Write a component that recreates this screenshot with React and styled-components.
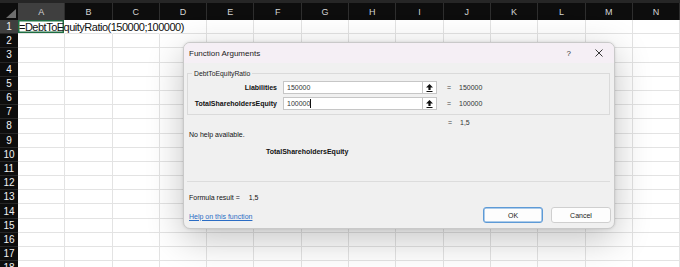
import React from 'react';
import styled, { createGlobalStyle, css } from 'styled-components';

const columns = ['A', 'B', 'C', 'D', 'E', 'F', 'G', 'H', 'I', 'J', 'K', 'L', 'M', 'N'];
const rows = Array.from({ length: 18 }, (_, i) => i + 1);

// the formula text in A1 runs over B1 and C1, so their right gridlines are hidden
const overflowCols = ['A', 'B', 'C'];

function UploadIcon() {
  return (
    <svg width="7" height="8" viewBox="0 0 7 8">
      <path d="M3.5 0 L7 3.6 H4.6 V6 H2.4 V3.6 H0 Z" fill="#111" />
      <rect x="0.5" y="7" width="6" height="1" fill="#111" />
    </svg>
  );
}

function CloseIcon() {
  return (
    <svg width="8" height="8" viewBox="0 0 8 8">
      <path d="M0.5 0.5 L7.5 7.5 M7.5 0.5 L0.5 7.5" stroke="#222" strokeWidth="0.9" />
    </svg>
  );
}

export default function App() {
  return (
    <>
      <GlobalStyle />
      <Sheet>
        <TopStrip />
        <Grid>
          <Corner />
          {columns.map((c) => (
            <ColHead key={c} $active={c === 'A'}>{c}</ColHead>
          ))}
          {rows.map((r) => (
            <React.Fragment key={r}>
              <RowHead $active={r === 1}>{r}</RowHead>
              {columns.map((c) => (
                <Cell
                  key={c}
                  $selected={r === 1 && c === 'A'}
                  $noRight={r === 1 && overflowCols.includes(c)}
                >
                  {r === 1 && c === 'A' && <CellText>=DebtToEquityRatio(150000;100000)</CellText>}
                </Cell>
              ))}
            </React.Fragment>
          ))}
        </Grid>

        <Dialog>
          <TitleBar>
            <Title>Function Arguments</Title>
            <TitleButtons>
              <Help>?</Help>
              <CloseIcon />
            </TitleButtons>
          </TitleBar>

          <Group>
            <Legend>DebtToEquityRatio</Legend>
            <ArgRow>
              <ArgLabel>Liabilities</ArgLabel>
              <ArgInput>150000</ArgInput>
              <PickButton><UploadIcon /></PickButton>
              <Equals>=</Equals>
              <Value>150000</Value>
            </ArgRow>
            <ArgRow>
              <ArgLabel>TotalShareholdersEquity</ArgLabel>
              <ArgInput>100000<Caret /></ArgInput>
              <PickButton><UploadIcon /></PickButton>
              <Equals>=</Equals>
              <Value>100000</Value>
            </ArgRow>
          </Group>

          <ResultRow>
            <Equals>=</Equals>
            <Value>1,5</Value>
          </ResultRow>

          <Text $top={5}>No help available.</Text>
          <ArgHelp>TotalShareholdersEquity</ArgHelp>

          <Separator />

          <Text $top={12}>
            Formula result =<FormulaValue>1,5</FormulaValue>
          </Text>

          <Footer>
            <HelpLink href="#">Help on this function</HelpLink>
            <Buttons>
              <DialogButton $primary>OK</DialogButton>
              <DialogButton>Cancel</DialogButton>
            </Buttons>
          </Footer>
        </Dialog>
      </Sheet>
    </>
  );
}

const GlobalStyle = createGlobalStyle`
  html, body {
    margin: 0;
    background: #ffffff;
    overflow: hidden;
  }
`;

const Sheet = styled.div`
  position: relative;
  width: 680px;
  height: 267px;
  overflow: hidden;
  background: #ffffff;
  font-family: "Liberation Sans", Arial, sans-serif;
`;

const TopStrip = styled.div`
  height: 3px;
  background: #262626;
`;

const Grid = styled.div`
  display: grid;
  grid-template-columns: 18px repeat(14, 47.3px);
  grid-template-rows: 17px repeat(18, 14.2px);
`;

const Corner = styled.div`
  background: #0d0d0d;
  position: relative;

  &::after {
    content: "";
    position: absolute;
    right: 2px;
    bottom: 2px;
    border-left: 10px solid transparent;
    border-bottom: 9px solid #6e6e6e;
  }
`;

const ColHead = styled.div`
  display: flex;
  align-items: center;
  justify-content: center;
  background: ${(p) => (p.$active ? '#3f3f3f' : '#0d0d0d')};
  border-right: 1px solid #2e2e2e;
  color: #d4d4d4;
  font-size: 9px;
  padding-top: 1px;
  box-sizing: border-box;
`;

const RowHead = styled.div`
  display: flex;
  align-items: center;
  justify-content: center;
  background: ${(p) => (p.$active ? '#3f3f3f' : '#0d0d0d')};
  border-bottom: 1px solid #262626;
  color: #f2f2f2;
  font-size: 10px;
  box-sizing: border-box;
`;

const Cell = styled.div`
  position: relative;
  box-sizing: border-box;
  border-bottom: 1px solid #e3e3e3;
  border-right: 1px solid ${(p) => (p.$noRight ? 'transparent' : '#e3e3e3')};

  ${(p) =>
    p.$selected &&
    css`
      box-shadow: inset 0 0 0 1.5px #1f6e43;
    `}
`;

const CellText = styled.span`
  position: absolute;
  left: 1px;
  top: 0;
  line-height: 14px;
  white-space: nowrap;
  font-size: 11px;
  letter-spacing: -0.5px;
  color: #111;
  z-index: 1;
`;

const Dialog = styled.div`
  position: absolute;
  left: 183px;
  top: 42px;
  width: 432px;
  height: 187px;
  box-sizing: border-box;
  display: flex;
  flex-direction: column;
  background: #f0f0f0;
  border: 1px solid #c9c9c9;
  border-radius: 7px;
  box-shadow: 0 10px 36px rgba(0, 0, 0, 0.24), 0 0 3px rgba(0, 0, 0, 0.12);
  overflow: hidden;
  color: #111;
  font-size: 7px;
  padding: 0 3px;
`;

const TitleBar = styled.div`
  display: flex;
  align-items: center;
  justify-content: space-between;
  height: 20px;
  margin: 0 -3px;
  padding: 0 11px 0 5px;
  background: #f5eff5;
  flex-shrink: 0;
`;

const Title = styled.span`
  font-size: 8px;
  color: #1a1a1a;
`;

const TitleButtons = styled.div`
  display: flex;
  align-items: center;
  gap: 24px;
`;

const Help = styled.span`
  font-size: 8px;
  color: #333;
`;

const Group = styled.fieldset`
  margin: 7px 1px 0 0;
  padding: 4px 0 4px 0;
  border: 1px solid #dadada;
  display: flex;
  flex-direction: column;
  gap: 3px;
`;

const Legend = styled.legend`
  margin-left: 4px;
  padding: 0 2px;
  font-size: 6.8px;
  color: #1b1b1b;
`;

const ArgRow = styled.div`
  display: grid;
  grid-template-columns: 95px 140px 14px 22px auto;
  align-items: center;
  height: 13px;
`;

const ArgLabel = styled.span`
  text-align: right;
  font-weight: bold;
  font-size: 7px;
  padding-right: 6px;
`;

const ArgInput = styled.div`
  display: flex;
  align-items: center;
  height: 13px;
  box-sizing: border-box;
  background: #ffffff;
  border: 1px solid #c6c6c6;
  padding-left: 3px;
  color: #333;
`;

const Caret = styled.span`
  width: 1px;
  height: 9px;
  background: #111;
`;

const PickButton = styled.div`
  display: flex;
  align-items: center;
  justify-content: center;
  height: 13px;
  box-sizing: border-box;
  background: #ffffff;
  border: 1px solid #c6c6c6;
  border-left: none;
`;

const Equals = styled.span`
  padding-left: 10px;
  color: #444;
`;

const Value = styled.span`
  color: #333;
`;

const ResultRow = styled.div`
  display: grid;
  grid-template-columns: 22px auto;
  padding-left: 251px;
  margin-top: 4px;
`;

const Text = styled.div`
  margin-top: ${(p) => p.$top}px;
  margin-left: 2px;
`;

const ArgHelp = styled.div`
  margin: 10px 0 0 79px;
  font-weight: bold;
  font-size: 7px;
`;

const Separator = styled.div`
  margin-top: 26px;
  height: 1px;
  background: #dcdcdc;
  margin-right: 1px;
`;

const FormulaValue = styled.span`
  margin-left: 9px;
`;

const Footer = styled.div`
  display: flex;
  align-items: center;
  justify-content: space-between;
  margin-top: 6px;
  margin-left: 2px;
`;

const HelpLink = styled.a`
  color: #2a6cc4;
  text-decoration: underline;
  margin-top: 2px;
`;

const Buttons = styled.div`
  display: flex;
  gap: 8px;
`;

const DialogButton = styled.button`
  width: 60px;
  height: 16px;
  padding: 0;
  font-family: inherit;
  font-size: 7px;
  color: #1b1b1b;
  background: #fdfdfd;
  border-radius: 3px;
  border: 1px solid ${(p) => (p.$primary ? '#5d9ad6' : '#cfcfcf')};
  box-shadow: ${(p) => (p.$primary ? 'inset 0 0 0 0.5px #5d9ad6' : 'none')};
`;
